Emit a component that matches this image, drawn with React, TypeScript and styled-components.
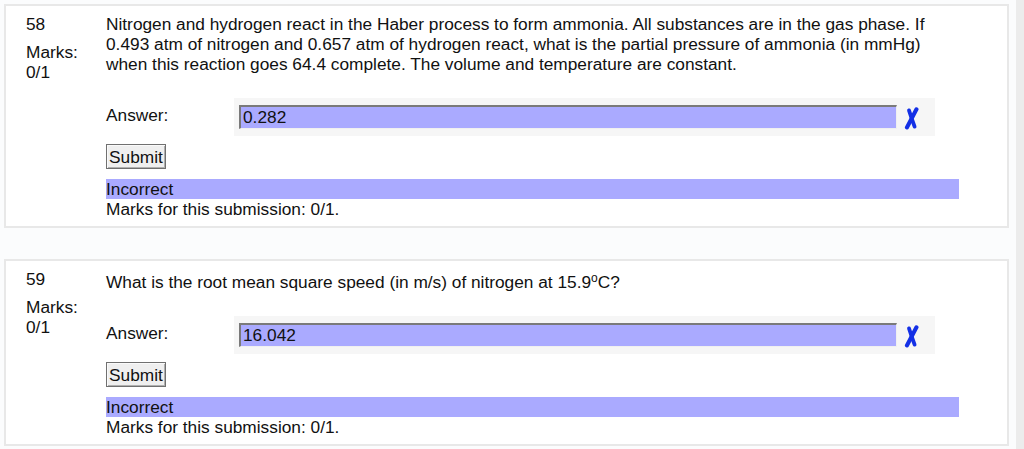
import * as React from 'react';
import styled, { createGlobalStyle } from 'styled-components';

const GlobalStyle = createGlobalStyle`
  html, body {
    margin: 0;
    padding: 0;
    background: #ececec;
  }
  body {
    font-family: "Liberation Sans", Arial, sans-serif;
    font-size: 17.3px;
    line-height: 20px;
    color: #111;
  }
`;

type Question = {
  num: number;
  text: React.ReactNode;
  answer: string;
};

const questions: Question[] = [
  {
    num: 58,
    text:
      'Nitrogen and hydrogen react in the Haber process to form ammonia. All substances are in the gas phase. If 0.493 atm of nitrogen and 0.657 atm of hydrogen react, what is the partial pressure of ammonia (in mmHg) when this reaction goes 64.4 complete. The volume and temperature are constant.',
    answer: '0.282',
  },
  {
    num: 59,
    text: (
      <>
        What is the root mean square speed (in m/s) of nitrogen at 15.9<sup>o</sup>C?
      </>
    ),
    answer: '16.042',
  },
];

const WrongMark = () => (
  <svg width="15" height="23" viewBox="0 0 15 23" aria-label="incorrect">
    <g stroke="#1430e6" strokeLinecap="round" fill="none">
      <path d="M12.4 2.4 L3 20.4" strokeWidth="4.2" />
      <path d="M5 3.4 Q7.6 11.5 10.6 19.6" strokeWidth="3.8" />
    </g>
  </svg>
);

const QuestionBlock = ({ q }: { q: Question }) => (
  <Card>
    <Info>
      <QNum>{q.num}</QNum>
      <div>Marks:</div>
      <div>0/1</div>
    </Info>
    <Content>
      <QText>{q.text}</QText>
      <AnswerRow>
        <AnswerLabel>Answer:</AnswerLabel>
        <AnswerCell>
          <AnswerInput readOnly value={q.answer} />
          <WrongMark />
        </AnswerCell>
      </AnswerRow>
      <SubmitButton type="button">Submit</SubmitButton>
      <Feedback>Incorrect</Feedback>
      <div>Marks for this submission: 0/1.</div>
    </Content>
  </Card>
);

const App = () => (
  <>
    <GlobalStyle />
    <Page>
      {questions.map((q) => (
        <QuestionBlock key={q.num} q={q} />
      ))}
    </Page>
  </>
);

const Page = styled.main`
  width: 1016px;
  min-height: 449px;
  box-sizing: border-box;
  padding: 4px 0 0 4px;
  background: #fbfcfd;
  display: flex;
  flex-direction: column;
  gap: 31px;
`;

const Card = styled.section`
  display: flex;
  width: 1005px;
  box-sizing: border-box;
  padding: 8px 48px 7px 20px;
  background: #fff;
  border: 2px solid #e8e8e8;
`;

const Info = styled.div`
  width: 80px;
  flex-shrink: 0;
`;

const QNum = styled.div`
  margin-bottom: 8px;
`;

const Content = styled.div`
  flex: 1;
  display: flex;
  flex-direction: column;
  align-items: flex-start;
`;

const QText = styled.div`
  sup {
    font-size: 12px;
    line-height: 18px;
    vertical-align: 6px;
  }
`;

const AnswerRow = styled.div`
  display: flex;
  align-items: center;
  margin-top: 24px;
`;

const AnswerLabel = styled.div`
  width: 128px;
  margin-top: -4px;
`;

const AnswerCell = styled.div`
  display: flex;
  align-items: center;
  gap: 7px;
  padding: 5px 16px 6px 5px;
  background: #f6f6f6;
  svg {
    margin-top: 4px;
  }
`;

const AnswerInput = styled.input`
  width: 658px;
  height: 24px;
  box-sizing: border-box;
  margin: 0;
  padding: 0 2px;
  font: inherit;
  color: #111;
  background: #aaaaff;
  border-style: solid;
  border-width: 2px 1px 1px 2px;
  border-color: #7a7a7a #f0f0f0 #f0f0f0 #7a7a7a;
  outline: none;
`;

const SubmitButton = styled.button`
  margin-top: 8px;
  height: 25px;
  box-sizing: border-box;
  padding: 0 2px;
  font: inherit;
  color: #111;
  background: #efefef;
  border: 1px solid #707070;
  box-shadow: inset 1px 1px 0 #fafafa, inset -1px -1px 0 #b0b0b0;
  border-radius: 0;
`;

const Feedback = styled.div`
  align-self: stretch;
  margin-top: 10px;
  background: #aaaaff;
`;

export default App;
